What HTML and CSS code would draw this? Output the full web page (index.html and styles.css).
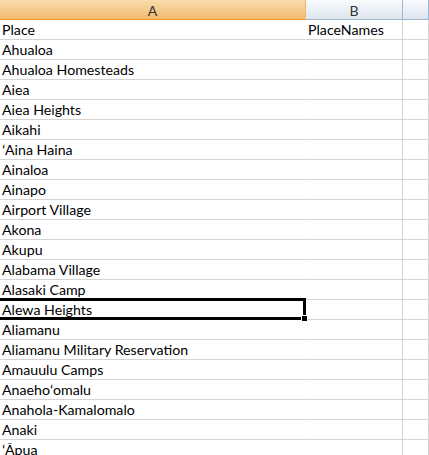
FILE: index.html
```html
<!DOCTYPE html>
<html>
<head>
<meta charset="utf-8">
<link rel="stylesheet" href="styles.css">
</head>
<body>
<div class="sheet">
  <div class="hdr">
    <div class="hcell col-a sel">A</div>
    <div class="hcell col-b">B</div>
    <div class="hcell col-c"></div>
  </div>
  <div class="rows">
    <div class="row"><div class="cell col-a">Place</div><div class="cell col-b">PlaceNames</div><div class="cell col-c"></div></div>
    <div class="row"><div class="cell col-a">Ahualoa</div><div class="cell col-b"></div><div class="cell col-c"></div></div>
    <div class="row"><div class="cell col-a">Ahualoa Homesteads</div><div class="cell col-b"></div><div class="cell col-c"></div></div>
    <div class="row"><div class="cell col-a">Aiea</div><div class="cell col-b"></div><div class="cell col-c"></div></div>
    <div class="row"><div class="cell col-a">Aiea Heights</div><div class="cell col-b"></div><div class="cell col-c"></div></div>
    <div class="row"><div class="cell col-a">Aikahi</div><div class="cell col-b"></div><div class="cell col-c"></div></div>
    <div class="row"><div class="cell col-a">ʻAina Haina</div><div class="cell col-b"></div><div class="cell col-c"></div></div>
    <div class="row"><div class="cell col-a">Ainaloa</div><div class="cell col-b"></div><div class="cell col-c"></div></div>
    <div class="row"><div class="cell col-a">Ainapo</div><div class="cell col-b"></div><div class="cell col-c"></div></div>
    <div class="row"><div class="cell col-a">Airport Village</div><div class="cell col-b"></div><div class="cell col-c"></div></div>
    <div class="row"><div class="cell col-a">Akona</div><div class="cell col-b"></div><div class="cell col-c"></div></div>
    <div class="row"><div class="cell col-a">Akupu</div><div class="cell col-b"></div><div class="cell col-c"></div></div>
    <div class="row"><div class="cell col-a">Alabama Village</div><div class="cell col-b"></div><div class="cell col-c"></div></div>
    <div class="row"><div class="cell col-a">Alasaki Camp</div><div class="cell col-b"></div><div class="cell col-c"></div></div>
    <div class="row"><div class="cell col-a active">Alewa Heights<span class="handle"></span></div><div class="cell col-b"></div><div class="cell col-c"></div></div>
    <div class="row"><div class="cell col-a">Aliamanu</div><div class="cell col-b"></div><div class="cell col-c"></div></div>
    <div class="row"><div class="cell col-a">Aliamanu Military Reservation</div><div class="cell col-b"></div><div class="cell col-c"></div></div>
    <div class="row"><div class="cell col-a">Amauulu Camps</div><div class="cell col-b"></div><div class="cell col-c"></div></div>
    <div class="row"><div class="cell col-a">Anaehoʻomalu</div><div class="cell col-b"></div><div class="cell col-c"></div></div>
    <div class="row"><div class="cell col-a">Anahola-Kamalomalo</div><div class="cell col-b"></div><div class="cell col-c"></div></div>
    <div class="row"><div class="cell col-a">Anaki</div><div class="cell col-b"></div><div class="cell col-c"></div></div>
    <div class="row"><div class="cell col-a">ʻĀpua</div><div class="cell col-b"></div><div class="cell col-c"></div></div>
  </div>
</div>
</body>
</html>
```
FILE: styles.css
```css
html, body {
  margin: 0;
  padding: 0;
  background: #ffffff;
  overflow: hidden;
}
.sheet {
  width: 429px;
  height: 455px;
  overflow: hidden;
  font-family: Lato, "Open Sans", sans-serif;
  font-size: 14.2px;
  color: #000;
}
.hdr {
  display: flex;
  height: 20px;
}
.hcell {
  box-sizing: border-box;
  height: 20px;
  display: flex;
  align-items: center;
  justify-content: center;
  font-size: 14px;
  padding-top: 1px;
  color: #333333;
  background: linear-gradient(#f9fbfd, #dde5f0);
  border-right: 1px solid #9eb6ce;
  border-bottom: 1px solid #9eb6ce;
}
.hcell.sel {
  background: linear-gradient(#f9dcae, #f4bb6e);
  border-right: 1px solid #f2b66a;
  border-bottom: 1px solid #f29536;
}
.col-a { width: 306px; flex: none; }
.col-b { width: 97px; flex: none; }
.col-c { flex: 1; }
.row {
  display: flex;
  height: 20px;
}
.cell {
  box-sizing: border-box;
  height: 20px;
  border-right: 1px solid #d4d4d4;
  border-bottom: 1px solid #d4d4d4;
  padding-left: 2px;
  line-height: 20px;
  white-space: nowrap;
}
.cell.col-a { border-right-color: transparent; }
.cell.active {
  position: relative;
}
.cell.active::after {
  content: "";
  position: absolute;
  left: -4px;
  top: -2px;
  right: -1px;
  bottom: -1px;
  border: 3px solid #000;
}
.handle {
  position: absolute;
  right: -3px;
  bottom: -3px;
  width: 5px;
  height: 5px;
  background: #000;
  border: 1px solid #fff;
  z-index: 2;
}
```
